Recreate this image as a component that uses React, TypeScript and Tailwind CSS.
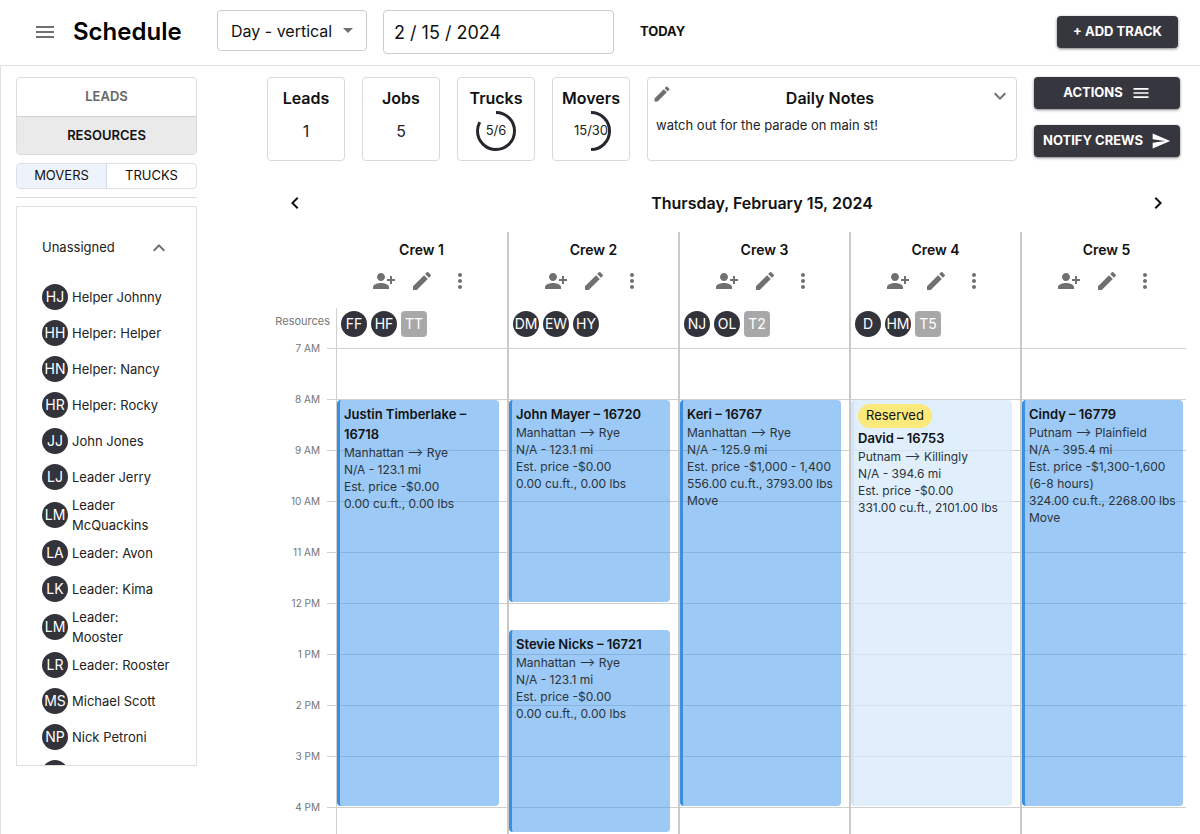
import React, { useState } from 'react'
import {
  MdArrowDropDown,
  MdChevronLeft,
  MdChevronRight,
  MdEdit,
  MdExpandLess,
  MdExpandMore,
  MdMenu,
  MdMoreVert,
  MdPersonAddAlt1,
  MdSend,
} from 'react-icons/md'

const HOUR_HEIGHT = 51
const FIRST_HOUR = 7

const hours = ['7 AM', '8 AM', '9 AM', '10 AM', '11 AM', '12 PM', '1 PM', '2 PM', '3 PM', '4 PM']

type Job = {
  title: string
  from: string
  to: string
  details: string[]
  start: number
  end: number
  reserved?: boolean
}

type Crew = {
  name: string
  people: string[]
  truck?: string
  jobs: Job[]
}

const crews: Crew[] = [
  {
    name: 'Crew 1',
    people: ['FF', 'HF'],
    truck: 'TT',
    jobs: [
      {
        title: 'Justin Timberlake – 16718',
        from: 'Manhattan',
        to: 'Rye',
        details: ['N/A - 123.1 mi', 'Est. price -$0.00', '0.00 cu.ft., 0.00 lbs'],
        start: 8,
        end: 16,
      },
    ],
  },
  {
    name: 'Crew 2',
    people: ['DM', 'EW', 'HY'],
    jobs: [
      {
        title: 'John Mayer – 16720',
        from: 'Manhattan',
        to: 'Rye',
        details: ['N/A - 123.1 mi', 'Est. price -$0.00', '0.00 cu.ft., 0.00 lbs'],
        start: 8,
        end: 12,
      },
      {
        title: 'Stevie Nicks – 16721',
        from: 'Manhattan',
        to: 'Rye',
        details: ['N/A - 123.1 mi', 'Est. price -$0.00', '0.00 cu.ft., 0.00 lbs'],
        start: 12.5,
        end: 16.5,
      },
    ],
  },
  {
    name: 'Crew 3',
    people: ['NJ', 'OL'],
    truck: 'T2',
    jobs: [
      {
        title: 'Keri – 16767',
        from: 'Manhattan',
        to: 'Rye',
        details: ['N/A - 125.9 mi', 'Est. price -$1,000 - 1,400', '556.00 cu.ft., 3793.00 lbs', 'Move'],
        start: 8,
        end: 16,
      },
    ],
  },
  {
    name: 'Crew 4',
    people: ['D', 'HM'],
    truck: 'T5',
    jobs: [
      {
        title: 'David – 16753',
        from: 'Putnam',
        to: 'Killingly',
        details: ['N/A - 394.6 mi', 'Est. price -$0.00', '331.00 cu.ft., 2101.00 lbs'],
        start: 8,
        end: 16,
        reserved: true,
      },
    ],
  },
  {
    name: 'Crew 5',
    people: [],
    jobs: [
      {
        title: 'Cindy – 16779',
        from: 'Putnam',
        to: 'Plainfield',
        details: [
          'N/A - 395.4 mi',
          'Est. price -$1,300-1,600',
          '(6-8 hours)',
          '324.00 cu.ft., 2268.00 lbs',
          'Move',
        ],
        start: 8,
        end: 16,
      },
    ],
  },
]

const movers = [
  ['HJ', 'Helper Johnny'],
  ['HH', 'Helper: Helper'],
  ['HN', 'Helper: Nancy'],
  ['HR', 'Helper: Rocky'],
  ['JJ', 'John Jones'],
  ['LJ', 'Leader Jerry'],
  ['LM', 'Leader McQuackins'],
  ['LA', 'Leader: Avon'],
  ['LK', 'Leader: Kima'],
  ['LM', 'Leader: Mooster'],
  ['LR', 'Leader: Rooster'],
  ['MS', 'Michael Scott'],
  ['NP', 'Nick Petroni'],
  ['', ''],
]

function Avatar({ text }: { text: string }) {
  return (
    <span className="flex size-[26px] shrink-0 items-center justify-center rounded-full bg-[#33333c] text-sm leading-none text-white">
      {text}
    </span>
  )
}

function Ring({ value }: { value: number }) {
  return (
    <svg viewBox="0 0 40 40" className="absolute inset-0 size-10 -rotate-90" aria-hidden="true">
      <circle
        cx="20"
        cy="20"
        r="18.5"
        fill="none"
        stroke="#26262e"
        strokeWidth="3"
        pathLength={100}
        strokeDasharray={`${value} 100`}
      />
    </svg>
  )
}

function StatCard({ title, value, ring }: { title: string; value: string; ring?: number }) {
  return (
    <div className="flex h-[84px] w-[78px] shrink-0 flex-col items-center gap-px rounded border border-[#d9d9d9] pt-2">
      <h2 className="text-base leading-6 font-semibold">{title}</h2>
      {ring === undefined ? (
        <p className="flex h-10 items-center text-base text-[#222]">{value}</p>
      ) : (
        <div className="relative flex size-10 items-center justify-center">
          <Ring value={ring} />
          <span className="text-[13px] text-[#222]">{value}</span>
        </div>
      )}
    </div>
  )
}

function DarkButton({ children, className }: { children: React.ReactNode; className: string }) {
  return (
    <button
      className={`flex h-8 items-center justify-center rounded bg-[#36363f] text-[13px] font-bold whitespace-nowrap text-white shadow-[0_1px_3px_rgba(0,0,0,0.5)] ${className}`}
    >
      {children}
    </button>
  )
}

function JobCard({ job }: { job: Job }) {
  return (
    <div
      className={`absolute right-2 left-0 overflow-hidden rounded border-l-3 pt-1 pl-1 ${
        job.reserved ? 'border-[#d3e6f7] bg-[#d6eafa]/75' : 'border-[#3a8fe0] bg-[#4b9ded]/55'
      }`}
      style={{
        top: (job.start - FIRST_HOUR) * HOUR_HEIGHT + 1,
        height: (job.end - job.start) * HOUR_HEIGHT - 2,
      }}
    >
      {job.reserved && (
        <span className="flex h-6 w-fit items-center rounded-full bg-[#fbe97c] px-2 text-[13px]">Reserved</span>
      )}
      <h3 className="text-[13px] leading-5 font-semibold">{job.title}</h3>
      <div className="text-xs leading-[17px] whitespace-nowrap text-[#2b333b]">
        <p>
          {job.from} ⟶ {job.to}
        </p>
        {job.details.map(d => (
          <p key={d}>{d}</p>
        ))}
      </div>
    </div>
  )
}

function CrewColumn({ crew, first }: { crew: Crew; first: boolean }) {
  const divider = first ? 'border-l border-[#d0d0d0]' : 'border-l-2 border-[#c9c9c9]'
  return (
    <section className="min-w-[171px] flex-1">
      <div className={`flex h-[76px] flex-col items-center pt-2 ${first ? '' : divider}`}>
        <h2 className="text-sm leading-5 font-semibold">{crew.name}</h2>
        <div className="mt-[9px] flex gap-[14px] text-2xl text-[#707070]">
          <button aria-label="Add person">
            <MdPersonAddAlt1 />
          </button>
          <button aria-label="Edit crew">
            <MdEdit />
          </button>
          <button aria-label="More">
            <MdMoreVert />
          </button>
        </div>
      </div>
      <div className={`flex h-10 gap-1 pt-[3px] pl-1 ${divider}`}>
        {crew.people.map(p => (
          <Avatar key={p} text={p} />
        ))}
        {crew.truck && (
          <span className="flex size-[26px] items-center justify-center rounded bg-[#a8a8a8] text-sm leading-none text-white">
            {crew.truck}
          </span>
        )}
      </div>
      <div className={`relative ${divider}`}>
        {hours.map(h => (
          <div key={h} className="h-[51px] border-t border-[#cfcfcf]" />
        ))}
        {crew.jobs.map(job => (
          <JobCard key={job.title} job={job} />
        ))}
      </div>
    </section>
  )
}

function Sidebar() {
  const [tab, setTab] = useState('movers')
  return (
    <aside className="flex w-[181px] shrink-0 flex-col pb-[68px]">
      <div className="overflow-hidden rounded border border-[#dcdcdc] text-[13px] font-semibold">
        <button className="block h-[38px] w-full text-[#666]">LEADS</button>
        <button className="block h-[38px] w-full border-t border-[#d0d0d0] bg-[#eaeaea]">RESOURCES</button>
      </div>
      <div className="mt-2 flex h-[26px] overflow-hidden rounded border border-[#dcdfe6] text-[13px]">
        <button
          onClick={() => setTab('movers')}
          className={`flex-1 border-r border-[#d5d9e2] ${tab === 'movers' ? 'bg-[#eef2fb]' : ''}`}
        >
          MOVERS
        </button>
        <button onClick={() => setTab('trucks')} className={`flex-1 ${tab === 'trucks' ? 'bg-[#eef2fb]' : ''}`}>
          TRUCKS
        </button>
      </div>
      <hr className="mt-2 border-[#dedede]" />
      <div className="mt-2 min-h-0 flex-1 overflow-hidden border border-[#e0e0e0] px-[25px] pt-[29px]">
        <button className="flex h-6 w-full items-center justify-between text-[13px] text-[#222]">
          Unassigned
          <MdExpandLess className="text-2xl text-[#707070]" />
        </button>
        <ul className="mt-[19px] text-[13px] leading-5 text-[#222]">
          {movers.map(([initials, name], i) => (
            <li key={i} className="flex min-h-9 items-center gap-1">
              <Avatar text={initials} />
              <span>{name}</span>
            </li>
          ))}
        </ul>
      </div>
    </aside>
  )
}

export default function App() {
  return (
    <div className="flex h-screen flex-col overflow-hidden bg-white font-['Inter',sans-serif] text-[#111]">
      <header className="flex h-[66px] shrink-0 items-start border-b border-[#e0e0e0] pt-[10px] pr-[22px] pl-[33px]">
        <button className="flex h-11 items-center text-2xl text-[#707070]" aria-label="Menu">
          <MdMenu />
        </button>
        <h1 className="ml-4 flex h-11 w-[144px] items-center text-2xl font-semibold text-black">Schedule</h1>
        <div className="relative">
          <select
            aria-label="View"
            className="h-[41px] w-[150px] appearance-none rounded border border-[#cccccc] bg-white pl-[13px] text-base"
          >
            <option>Day - vertical</option>
          </select>
          <MdArrowDropDown className="pointer-events-none absolute top-2 right-[7px] text-2xl text-[#707070]" />
        </div>
        <input
          aria-label="Date"
          defaultValue="2 / 15 / 2024"
          className="ml-4 h-11 w-[231px] rounded border border-[#cccccc] px-[10px] text-lg"
        />
        <button className="ml-[26px] h-11 text-[13px] font-bold">TODAY</button>
        <DarkButton className="mt-[6px] ml-auto w-[121px]">+ ADD TRACK</DarkButton>
      </header>

      <div className="flex min-h-0 flex-1 border-l border-[#e0e0e0] pt-[11px] pl-[15px]">
        <Sidebar />

        <main className="ml-[70px] flex min-w-0 flex-1 flex-col">
          <div className="mr-5 flex gap-[17px]">
            <StatCard title="Leads" value="1" />
            <StatCard title="Jobs" value="5" />
            <StatCard title="Trucks" value="5/6" ring={83} />
            <StatCard title="Movers" value="15/30" ring={50} />
            <div className="min-w-0 flex-1 rounded border border-[#d9d9d9] px-1 pt-[6px]">
              <div className="flex items-start justify-between text-[#707070]">
                <button className="text-xl" aria-label="Edit notes">
                  <MdEdit />
                </button>
                <h2 className="pt-0.5 text-base leading-6 font-semibold text-[#111]">Daily Notes</h2>
                <button className="text-2xl" aria-label="Expand notes">
                  <MdExpandMore />
                </button>
              </div>
              <p className="mt-[3px] px-1 text-[13px] leading-6 text-[#222]">watch out for the parade on main st!</p>
            </div>
            <div className="flex w-[146px] shrink-0 flex-col gap-4">
              <DarkButton className="w-full gap-2">
                ACTIONS
                <MdMenu className="text-xl" />
              </DarkButton>
              <DarkButton className="w-full gap-2">
                NOTIFY CREWS
                <MdSend className="text-xl" />
              </DarkButton>
            </div>
          </div>

          <div className="mt-[30px] mr-[30px] ml-4 flex h-6 items-center">
            <button className="text-2xl" aria-label="Previous day">
              <MdChevronLeft />
            </button>
            <h2 className="flex-1 pl-[71px] text-center text-base font-semibold">Thursday, February 15, 2024</h2>
            <button className="text-2xl" aria-label="Next day">
              <MdChevronRight />
            </button>
          </div>

          <div className="mt-[17px] mr-[14px] flex min-h-0 flex-1 overflow-hidden text-[#111]">
            <div className="w-[69px] shrink-0 text-[#757575]">
              <div className="h-[116px] pt-20 pr-[6px] text-right text-[11px] leading-[18px]">Resources</div>
              {hours.map(h => (
                <div key={h} className="flex h-[51px] justify-end gap-[7px]">
                  <span className="-mt-2 text-[10px] leading-4">{h}</span>
                  <span className="w-[9px] border-t border-[#cfcfcf]" />
                </div>
              ))}
            </div>
            {crews.map((crew, i) => (
              <CrewColumn key={crew.name} crew={crew} first={i === 0} />
            ))}
          </div>
        </main>
      </div>
    </div>
  )
}
